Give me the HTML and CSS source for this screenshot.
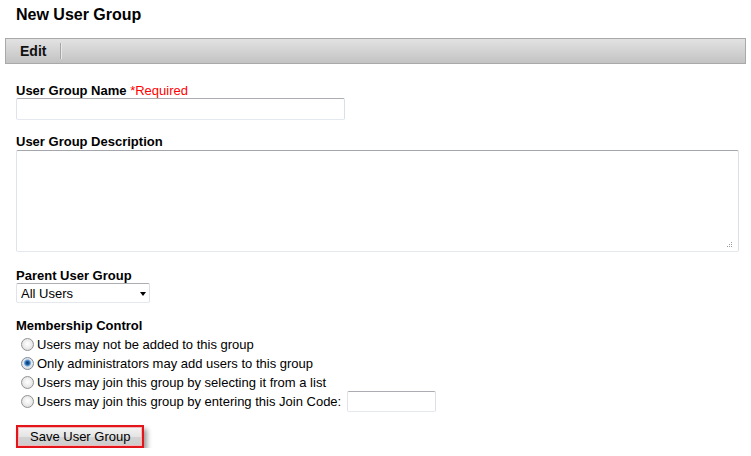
FILE: index.html
```html
<!DOCTYPE html>
<html>
<head>
<meta charset="utf-8">
<title>New User Group</title>
<link rel="stylesheet" href="styles.css">
</head>
<body>
<h1 class="page-title">New User Group</h1>
<div class="toolbar">
  <span class="tb-item">Edit</span>
  <span class="tb-sep"></span>
</div>
<form class="form">
  <div class="field field-name">
    <label class="label">User Group Name <span class="req">*Required</span></label>
    <input class="text name-input" type="text">
  </div>
  <div class="field field-desc">
    <label class="label">User Group Description</label>
    <div class="ta-wrap">
      <textarea class="textarea"></textarea>
      <svg class="grip" width="6" height="6" viewBox="0 0 6 6"><rect x="5" y="0" width="1" height="1"/><rect x="3" y="2" width="1" height="1"/><rect x="5" y="2" width="1" height="1"/><rect x="1" y="4" width="1" height="1"/><rect x="3" y="4" width="1" height="1"/><rect x="5" y="4" width="1" height="1"/></svg>
    </div>
  </div>
  <div class="field field-parent">
    <label class="label">Parent User Group</label>
    <span class="select-wrap">
      <select class="select"><option>All Users</option></select>
    </span>
  </div>
  <div class="field field-member">
    <div class="label">Membership Control</div>
    <div class="radios">
      <label class="radio-row"><input class="radio" type="radio" name="mc">Users may not be added to this group</label>
      <label class="radio-row"><input class="radio" type="radio" name="mc" checked>Only administrators may add users to this group</label>
      <label class="radio-row"><input class="radio" type="radio" name="mc">Users may join this group by selecting it from a list</label>
      <label class="radio-row"><input class="radio" type="radio" name="mc">Users may join this group by entering this Join Code:<input class="text code-input" type="text"></label>
    </div>
  </div>
  <div class="actions">
    <span class="highlight"><button class="btn" type="button">Save User Group</button></span>
  </div>
</form>
</body>
</html>
```

FILE: styles.css
```css
html, body {
  margin: 0;
  padding: 0;
  background: #fff;
  color: #000;
  font-family: "Liberation Sans", Arial, sans-serif;
}

.page-title {
  margin: 0;
  padding: 6px 0 0 16px;
  font-size: 16px;
  line-height: 18px;
  font-weight: bold;
}

.toolbar {
  margin: 14px 5px 0 5px;
  height: 24px;
  border: 1px solid #a9a9a9;
  background: linear-gradient(#e2e2e2, #c3c3c3);
  display: flex;
  align-items: center;
}

.tb-item {
  font-size: 14px;
  font-weight: bold;
  line-height: 24px;
  padding: 0 14px 0 14px;
  color: #111;
}

.tb-sep {
  width: 1px;
  height: 16px;
  background: #a5a5a5;
  box-shadow: 1px 0 0 #e8e8e8;
}

.form {
  padding-left: 16px;
}

.label {
  display: block;
  font-size: 13px;
  line-height: 15px;
  font-weight: bold;
}

.req {
  color: #ff0000;
  font-weight: normal;
}

.field-name { margin-top: 19px; }
.field-desc { margin-top: 14px; }
.field-parent { margin-top: 16px; }
.field-member { margin-top: 15px; }

.text {
  box-sizing: border-box;
  display: block;
  border: 1px solid;
  border-color: #abadb3 #dbdfe6 #e3e9ef #e2e3ea;
  border-radius: 2px;
  background: #fff;
  font: 13px "Liberation Sans", Arial, sans-serif;
  padding: 0 3px;
  margin: 0;
  outline: none;
}

.name-input {
  width: 329px;
  height: 22px;
}

.ta-wrap {
  position: relative;
  width: 723px;
  margin-top: 1px;
}

.textarea {
  box-sizing: border-box;
  display: block;
  width: 723px;
  height: 102px;
  margin: 0;
  border: 1px solid;
  border-color: #a3a6ad #dbdfe6 #e3e9ef #e2e3ea;
  border-radius: 2px;
  resize: none;
  font: 13px "Liberation Sans", Arial, sans-serif;
  outline: none;
}

.grip {
  position: absolute;
  right: 7px;
  bottom: 4px;
  fill: #9a9a9a;
}

.select-wrap {
  position: relative;
  display: block;
  width: 134px;
  height: 20px;
}

.select {
  appearance: none;
  -webkit-appearance: none;
  box-sizing: border-box;
  width: 134px;
  height: 20px;
  margin: 0;
  padding: 0 0 0 4px;
  border: 1px solid;
  border-color: #abadb3 #dbdfe6 #e3e9ef #e2e3ea;
  border-radius: 2px;
  background: #fff;
  color: #000;
  font: 13px "Liberation Sans", Arial, sans-serif;
  outline: none;
}

.select-wrap::after {
  content: "";
  position: absolute;
  right: 4px;
  top: 9px;
  border-left: 3.5px solid transparent;
  border-right: 3.5px solid transparent;
  border-top: 4px solid #000;
}

.radios {
  margin-top: 2px;
}

.radio-row {
  display: flex;
  align-items: center;
  height: 19px;
  font-size: 13px;
  line-height: 19px;
}

.radio {
  appearance: none;
  -webkit-appearance: none;
  box-sizing: border-box;
  width: 13px;
  height: 13px;
  margin: 0 3px 0 5px;
  border-radius: 50%;
  border: 1px solid #929292;
  background: radial-gradient(circle at 50% 45%, #ffffff 0, #f2f2f2 35%, #d6d6d6 100%);
}

.radio:checked {
  border-color: #7f8a97;
  background: radial-gradient(circle at 50% 45%, #0c2f5a 0, #1f5fa3 1.8px, #6fa6dc 3px, #dfe6ee 4px, #e4e4e4 5px, #d2d2d2 100%);
}

.code-input {
  width: 89px;
  height: 21px;
  margin: 0 0 0 6px;
  flex: none;
}

.actions {
  margin-top: 14px;
}

.highlight {
  display: inline-block;
  border: 2px solid #e4141b;
  box-shadow: 3px 4px 5px rgba(0, 0, 0, 0.4);
}

.btn {
  display: block;
  box-sizing: border-box;
  height: 19px;
  margin: 0;
  padding: 0 11px;
  border: 1px solid #f0b8b8;
  background: linear-gradient(#f2f2f2, #e4e4e4 50%, #d3d3d3 51%, #cdcdcd);
  font: 13px "Liberation Sans", Arial, sans-serif;
  line-height: 17px;
  color: #000;
}
```
